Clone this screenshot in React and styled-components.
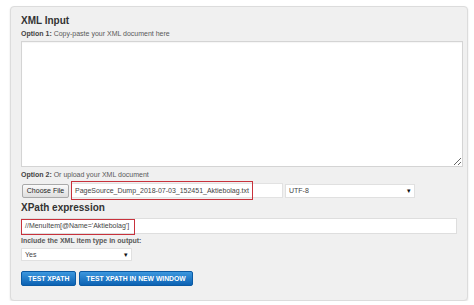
import React from 'react'
import styled, { createGlobalStyle } from 'styled-components'

const GlobalStyle = createGlobalStyle`
  body {
    margin: 0;
    background: #ffffff;
    font-family: "Liberation Sans", Arial, sans-serif;
    color: #333;
  }
`

export default function App() {
  return (
    <>
      <GlobalStyle />
      <Panel>
        <Title>XML Input</Title>
        <Label>
          <b>Option 1:</b> Copy-paste your XML document here
        </Label>
        <XmlArea readOnly defaultValue="" />
        <Label $top={3}>
          <b>Option 2:</b> Or upload your XML document
        </Label>
        <FileRow>
          <ChooseButton>Choose File</ChooseButton>
          <FileField>
            PageSource_Dump_2018-07-03_152451_Aktiebolag.txt
            <Highlight $w={182} $h={19} $top={-3} />
          </FileField>
          <FakeSelect $w={130} $h={14}>
            UTF-8
            <Arrow>▾</Arrow>
          </FakeSelect>
        </FileRow>
        <Title $top={1}>XPath expression</Title>
        <XPathField>
          //MenuItem[@Name='Aktiebolag']
          <Highlight $w={114} $h={16} $top={0} />
        </XPathField>
        <Label $top={2} $bold>Include the XML item type in output:</Label>
        <FakeSelect $w={111} $h={13} $top={2}>
          Yes
          <Arrow>▾</Arrow>
        </FakeSelect>
        <ButtonRow>
          <BlueButton>TEST XPATH</BlueButton>
          <BlueButton>TEST XPATH IN NEW WINDOW</BlueButton>
        </ButtonRow>
      </Panel>
    </>
  )
}

const Panel = styled.section`
  box-sizing: border-box;
  width: 458px;
  height: 295px;
  margin: 6px 0 0 10px;
  padding: 7px 10px 0 10px;
  background: #f0f0f0;
  border: 1px solid #dcdcdc;
  border-radius: 4px;
  box-shadow: 0 1px 2px rgba(0, 0, 0, 0.12);
  display: flex;
  flex-direction: column;
  align-items: flex-start;
`

const Title = styled.h2`
  margin: ${p => p.$top || 0}px 0 0 0;
  font-size: 10px;
  line-height: 14px;
  font-weight: 700;
  color: #333;
`

const Label = styled.div`
  margin-top: ${p => (p.$top === undefined ? 1 : p.$top)}px;
  font-size: 7px;
  line-height: 10px;
  color: #595959;
  font-weight: ${p => (p.$bold ? 700 : 400)};
  b {
    color: #444;
  }
`

const XmlArea = styled.textarea`
  box-sizing: border-box;
  margin: 2px 0 0 0;
  width: 442px;
  height: 126px;
  padding: 2px;
  background: #fff;
  border: 1px solid #d4d4d4;
  border-radius: 0;
  box-shadow: inset 0 1px 1px rgba(0, 0, 0, 0.04);
  resize: both;
  outline: none;
`

const FileRow = styled.div`
  display: flex;
  align-items: center;
  height: 19px;
  margin-top: 1px;
  gap: 2px;
`

const ChooseButton = styled.button`
  box-sizing: border-box;
  margin-left: 1px;
  width: 47px;
  height: 14px;
  padding: 0;
  font-family: "Liberation Sans", Arial, sans-serif;
  font-size: 7px;
  color: #222;
  background: linear-gradient(#fafafa, #dedede);
  border: 1px solid #a9a9a9;
  border-radius: 2px;
`

const FileField = styled.div`
  position: relative;
  box-sizing: border-box;
  width: 212px;
  height: 15px;
  padding-left: 3px;
  background: #fff;
  border: 1px solid #e2e2e2;
  font-size: 7px;
  line-height: 13px;
  color: #444;
  white-space: nowrap;
`

const Highlight = styled.span`
  position: absolute;
  left: -1px;
  top: ${p => p.$top}px;
  width: ${p => p.$w}px;
  height: ${p => p.$h}px;
  box-sizing: border-box;
  border: 1.5px solid #c8323c;
  pointer-events: none;
`

const FakeSelect = styled.div`
  position: relative;
  box-sizing: border-box;
  width: ${p => p.$w}px;
  height: ${p => p.$h}px;
  margin-top: ${p => p.$top || 0}px;
  padding-left: 3px;
  background: #fff;
  border: 1px solid #e0e0e0;
  font-size: 7px;
  line-height: ${p => p.$h - 2}px;
  color: #444;
  display: flex;
  align-items: center;
  justify-content: space-between;
`

const Arrow = styled.span`
  font-size: 7px;
  color: #111;
  padding-right: 3px;
`

const XPathField = styled.div`
  position: relative;
  box-sizing: border-box;
  margin-top: 3px;
  width: 436px;
  height: 16px;
  padding-left: 3px;
  background: #fff;
  border: 1px solid #dedede;
  font-size: 7px;
  line-height: 14px;
  color: #444;
`

const ButtonRow = styled.div`
  display: flex;
  gap: 3px;
  margin-top: 10px;
`

const BlueButton = styled.button`
  box-sizing: border-box;
  height: 15px;
  padding: 0 6px;
  font-family: "Liberation Sans", Arial, sans-serif;
  font-size: 6.8px;
  font-weight: 700;
  color: #fff;
  background: linear-gradient(#3c97de, #0c62b3);
  border: 1px solid #0b5aa3;
  border-radius: 2px;
  white-space: nowrap;
`
